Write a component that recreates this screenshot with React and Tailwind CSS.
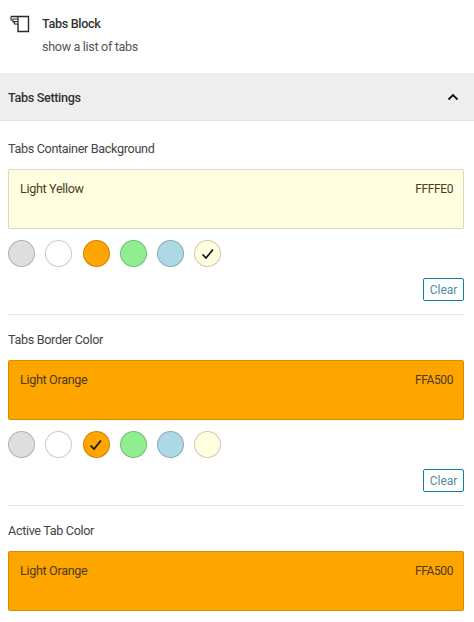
import React from "react";

const swatches = ["#dedede", "#ffffff", "#ffa500", "#90ee90", "#add8e6", "#ffffe0"];

function TabsIcon() {
  return (
    <svg width="20" height="18" viewBox="0 0 20 18" fill="none" stroke="#2a2a2a" strokeWidth="1.4" className="shrink-0">
      <path d="M1 1.5H18.5V16.5H8V9" />
      <path d="M1 1.5V5H3V7H4.5V9H8V1.5" strokeWidth="1.2" />
      <path d="M2.5 4H8M4 6.5H8" strokeWidth="1" />
    </svg>
  );
}

function Check() {
  return (
    <svg width="14" height="12" viewBox="0 0 14 12" fill="none" stroke="#111111" strokeWidth="1.7">
      <path d="M1.5 6.5L5 10L12 1.5" />
    </svg>
  );
}

function Swatch({ color, selected }) {
  return (
    <div
      className="flex h-[27px] w-[27px] items-center justify-center rounded-full border border-black/20"
      style={{ backgroundColor: color }}
    >
      {selected && <Check />}
    </div>
  );
}

function ColorSection({ label, name, hex, color, selectedIndex, first, showControls = true }) {
  return (
    <section className="pl-2 pr-[10px]">
      <div className={`${first ? "pt-[19px]" : "pt-[16px]"} text-[12.6px] leading-[18px] tracking-[-0.33px] text-[#444]`}>{label}</div>
      <div
        className="mt-[11px] flex h-[60px] items-start justify-between rounded-[2px] border border-black/15 pl-[11px] pr-[10px] pt-[10px] text-[12.6px] leading-[18px] tracking-[-0.33px] text-[#4a3a20]"
        style={{ backgroundColor: color }}
      >
        <span>{name}</span>
        <span className="text-[12px] tracking-[-0.4px]">{hex}</span>
      </div>
      {showControls && (
        <>
          <div className="mt-[11px] flex gap-[10.3px]">
            {swatches.map((c, i) => (
              <Swatch key={c} color={c} selected={i === selectedIndex} />
            ))}
          </div>
          <div className="mt-[11px] flex justify-end">
            <button className="h-[23px] w-[41px] rounded-[2px] border border-[#0e7fa8] bg-white text-[12px] leading-[20px] text-[#4f8ba5]">
              Clear
            </button>
          </div>
          <div className="mt-[13px] h-px bg-[#e6e6e6]" />
        </>
      )}
    </section>
  );
}

export default function App() {
  return (
    <div
      className="h-[622px] w-[474px] overflow-hidden bg-white"
      style={{ fontFamily: 'Roboto, "Noto Sans", sans-serif' }}
    >
      <header className="flex h-[73px] gap-[12px] pl-[10px] pt-[15px]">
        <TabsIcon />
        <div className="tracking-[-0.33px]">
          <div className="text-[12.6px] font-medium leading-[18px] text-[#333]">Tabs Block</div>
          <div className="mt-[5px] text-[12.6px] leading-[18px] text-[#555]">show a list of tabs</div>
        </div>
      </header>
      <div className="flex h-[48px] items-center justify-between border-b border-[#e2e2e2] bg-[#eeeeee] pl-2 pr-[15px]">
        <span className="pt-[3px] text-[12.6px] font-medium tracking-[-0.33px] text-[#333]">Tabs Settings</span>
        <svg width="12" height="8" viewBox="0 0 12 8" fill="none" stroke="#111" strokeWidth="1.8">
          <path d="M1.5 6.5L6 2L10.5 6.5" />
        </svg>
      </div>
      <ColorSection first label="Tabs Container Background" name="Light Yellow" hex="FFFFE0" color="#ffffe0" selectedIndex={5} />
      <ColorSection label="Tabs Border Color" name="Light Orange" hex="FFA500" color="#ffa500" selectedIndex={2} />
      <ColorSection label="Active Tab Color" name="Light Orange" hex="FFA500" color="#ffa500" showControls={false} />
    </div>
  );
}
